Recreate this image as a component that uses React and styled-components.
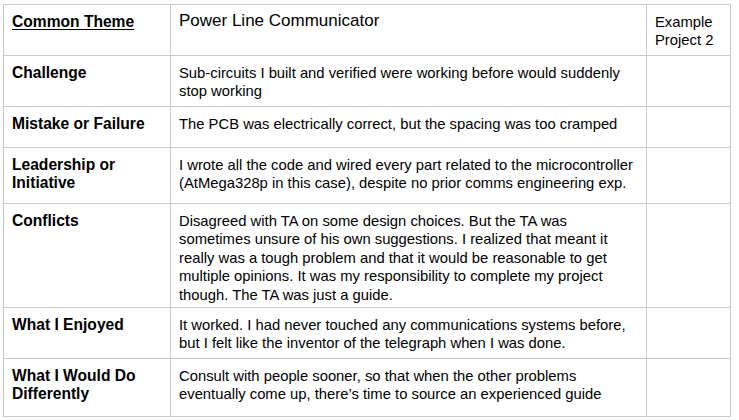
import React from 'react';
import styled, { createGlobalStyle } from 'styled-components';

const GlobalStyle = createGlobalStyle`
    html, body {
        margin: 0;
        padding: 0;
        background: #fff;
    }
`;

const Page = styled.div`
    padding: 4px 0 0 3px;
    font-family: "Liberation Sans", Arial, sans-serif;
    color: #000;
`;

const Table = styled.table`
    table-layout: fixed;
    width: 727px;
    border-collapse: collapse;

    td {
        border: 1px solid #c9c9c9;
        vertical-align: top;
        padding: 8px 8px 0;
    }
`;

const Row = styled.tr`
    height: ${props => props.h}px;
`;

const Label = styled.td`
    font-size: 15.6px;
    font-weight: 700;
    line-height: 18.4px;

    u {
        text-decoration-thickness: 1px;
        text-underline-offset: 2px;
    }
`;

const Cell = styled.td`
    font-size: ${props => props.big ? '17px' : '14.8px'};
    line-height: 18.4px;
    padding-top: ${props => props.big ? '7px' : '8px'} !important;
`;

const rows = [
    {
        label: 'Challenge',
        text: 'Sub-circuits I built and verified were working before would suddenly stop working',
        h: 51,
    },
    {
        label: 'Mistake or Failure',
        text: 'The PCB was electrically correct, but the spacing was too cramped',
        h: 41,
    },
    {
        label: <>Leadership or<br />Initiative</>,
        text: 'I wrote all the code and wired every part related to the microcontroller (AtMega328p in this case), despite no prior comms engineering exp.',
        h: 56,
    },
    {
        label: 'Conflicts',
        text: 'Disagreed with TA on some design choices. But the TA was sometimes unsure of his own suggestions. I realized that meant it really was a tough problem and that it would be reasonable to get multiple opinions. It was my responsibility to complete my project though. The TA was just a guide.',
        h: 104,
    },
    {
        label: 'What I Enjoyed',
        text: 'It worked. I had never touched any communications systems before, but I felt like the inventor of the telegraph when I was done.',
        h: 51,
    },
    {
        label: <>What I Would Do<br />Differently</>,
        text: 'Consult with people sooner, so that when the other problems eventually come up, there\u2019s time to source an experienced guide',
        h: 58,
    },
];

export default function App() {
    return (
        <Page>
            <GlobalStyle />
            <Table>
                <colgroup>
                    <col style={{ width: 167 }} />
                    <col style={{ width: 476 }} />
                    <col style={{ width: 84 }} />
                </colgroup>
                <tbody>
                    <Row h={51}>
                        <Label><u>Common Theme</u></Label>
                        <Cell big>Power Line Communicator</Cell>
                        <Cell>Example Project 2</Cell>
                    </Row>
                    {rows.map((r, i) => (
                        <Row key={i} h={r.h}>
                            <Label>{r.label}</Label>
                            <Cell>{r.text}</Cell>
                            <Cell />
                        </Row>
                    ))}
                </tbody>
            </Table>
        </Page>
    );
}
